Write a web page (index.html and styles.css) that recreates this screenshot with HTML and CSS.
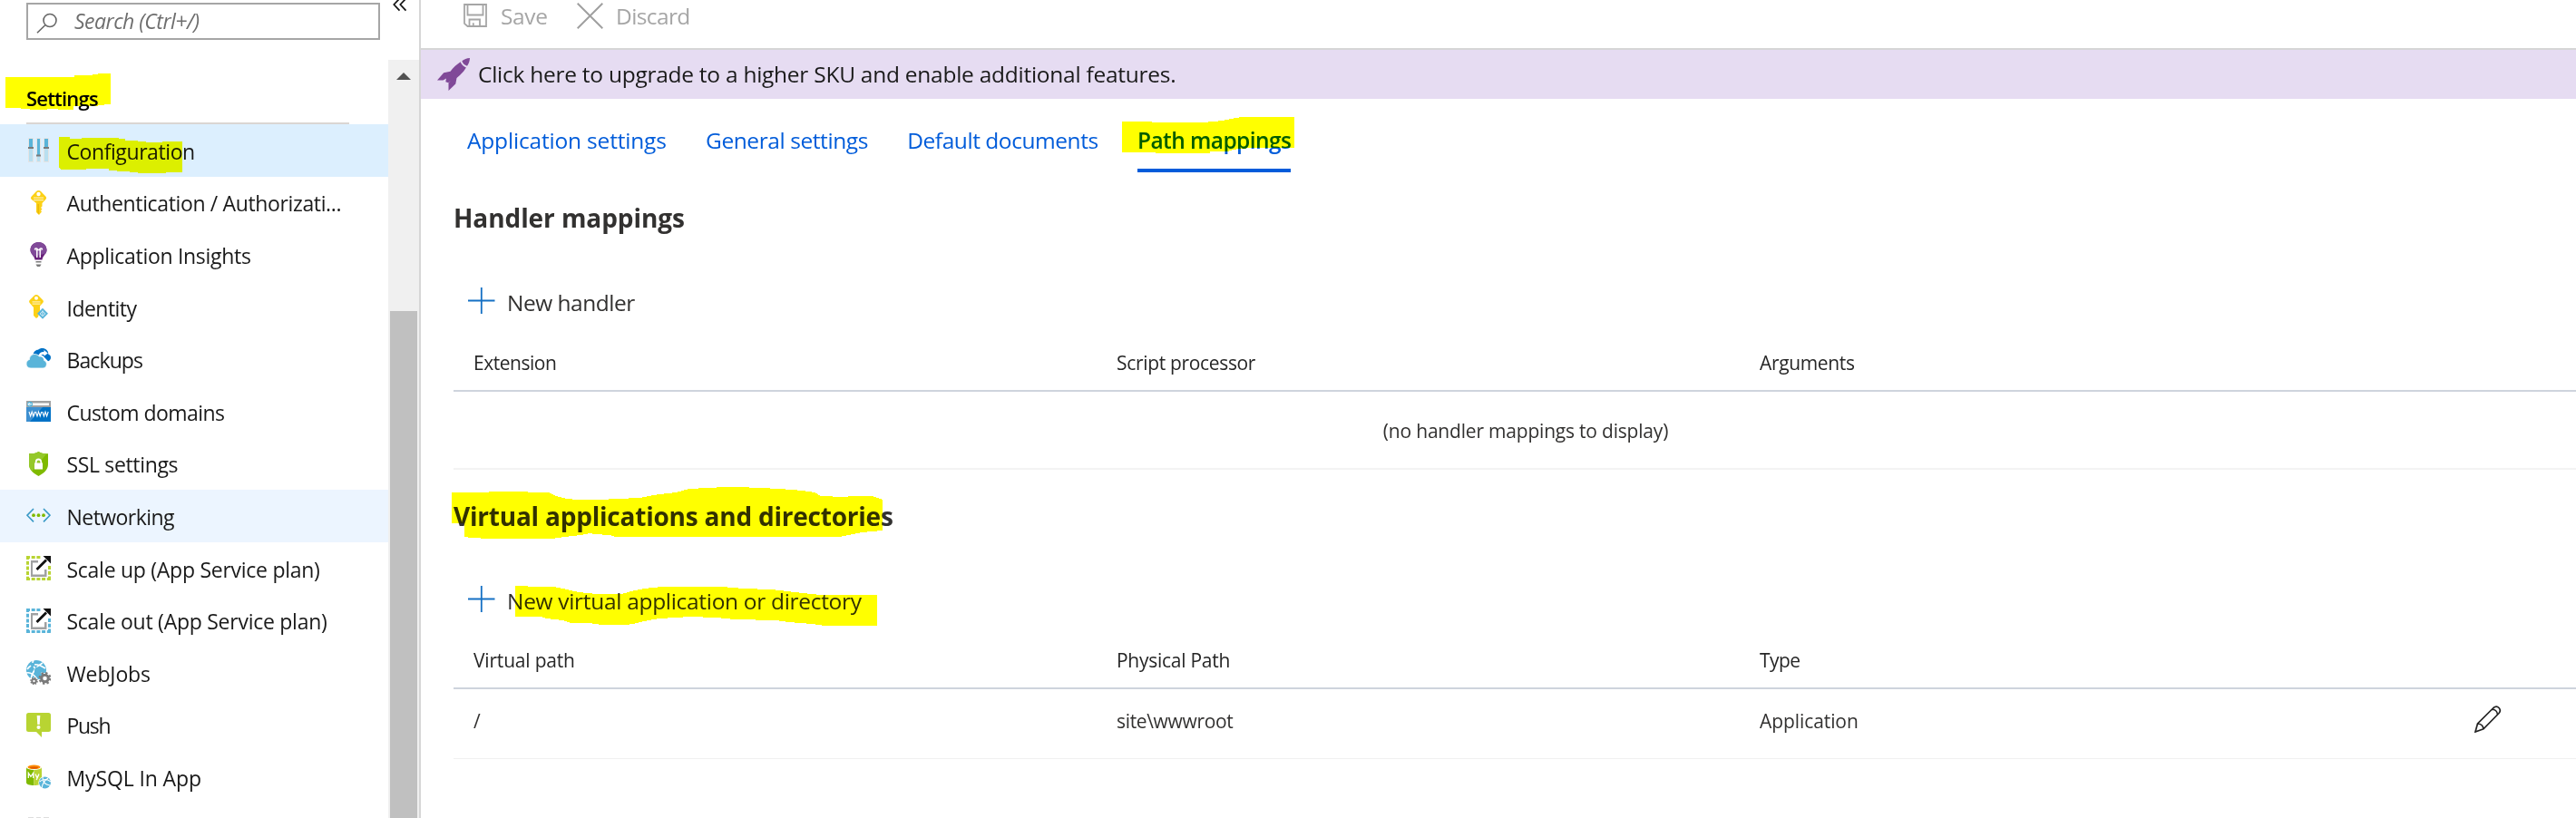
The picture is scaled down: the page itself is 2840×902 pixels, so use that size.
FILE: index.html
```html
<!DOCTYPE html>
<html lang="en">
<head>
<meta charset="utf-8">
<title>Configuration - Path mappings</title>
<link rel="stylesheet" href="styles.css">
</head>
<body>
<div class="page">
  <aside class="sidebar">
    <div class="search-row">
      <div class="search">
        <svg class="search-icon" width="24" height="24" viewBox="0 0 24 24" fill="none" stroke="#666" stroke-width="1.6"><circle cx="15" cy="8.5" r="7"/><path d="M10 13.5L1 22.3"/></svg>
        <span class="search-text">Search (Ctrl+/)</span>
      </div>
      <svg class="collapse" width="16" height="13" viewBox="0 0 16 13" fill="none" stroke="#111" stroke-width="1.7"><path d="M7.5 -1.5L1.3 5L7.5 11.6M14.5 -1.5L8.3 5L14.5 11.6"/></svg>
    </div>
    <div class="side-body">
      <nav class="nav">
        <h2 class="nav-title">Settings</h2>
        <a class="item selected">
          <svg width="27" height="27" viewBox="0 0 27 27"><g fill="#e4e4e4"><path d="M2 0h6v27H2zM11 0h5v27h-5zM19 0h6v27h-6z"/></g><g fill="#b8dff0"><path d="M3 10h4v16H3zM12 20h3v6h-3zM20 10h4v16h-4z"/></g><g fill="#59b4d9"><path d="M3 1h4v9H3zM12 1h3v18h-3zM20 1h4v9h-4z"/></g><path d="M2 10h6v2H2zM11 18.500h5v2h-5zM19 10h6v2h-6z" fill="#7a7a7a"/></svg>
          <span class="k42">Configuration</span></a>
        <a class="item">
          <svg width="27" height="27" viewBox="0 0 27 27"><path d="M13.500 0c1 0 1.800.4 2.500 1.100l5.500 5.600c.8.900.8 2.200 0 3L17.500 14v3.500l-1.500 1.500 1.500 1.500-1.500 1.700 1 1.300-3 3.500-3-3V14L5.600 9.700c-.8-.8-.8-2.100 0-3L11 1.100C11.700.4 12.500 0 13.500 0z" fill="#fcd116"/><circle cx="13.500" cy="4" r="2.200" fill="#fff"/><path d="M8 7.500h11v1.300H8zM8 10h11v1.300H8z" fill="#fff" opacity=".65"/><path d="M12.500 15h1.500v11l-1.500-1z" fill="#e0a800" opacity=".6"/></svg>
          <span class="k36">Authentication / Authorizati...</span></a>
        <a class="item">
          <svg width="27" height="27" viewBox="0 0 27 27"><path d="M13.500 0c5.100 0 9 3.900 9 8.800 0 4.200-4.200 5.700-5 10.700h-8C8.700 14.500 4.500 13 4.500 8.800 4.500 3.900 8.400 0 13.500 0z" fill="#68217a"/><path d="M13.500 0c5.100 0 9 3.900 9 8.800 0 1.500-.5 2.700-1.200 3.700L8 16C6.500 13.300 4.500 12 4.500 8.800 4.500 3.900 8.400 0 13.500 0z" fill="#804998"/><path d="M11.800 17V8.500M15.200 17V8.500M9.500 8.500q0-2 1.700-1.500t.6 1.500h3.400q-1-1 .6-1.500t1.700 1.500" fill="none" stroke="#fff" stroke-width="1.500"/><path d="M10.500 21h6v1.500h-6zM10.500 24.500h6L15 27h-3z" fill="#7a7a7a"/></svg>
          <span class="k30">Application Insights</span></a>
        <a class="item">
          <svg width="27" height="27" viewBox="0 0 27 27"><path d="M11 0c1 0 1.700.4 2.400 1l4.900 5c.8.800.8 2 0 2.800L15 12.500v5l-2 7L11 26l-3-3v-9L3.700 8.900c-.8-.8-.8-2 0-2.800L8.700 1C9.400.4 10.100 0 11 0z" fill="#fcd116"/><circle cx="11" cy="3.700" r="2" fill="#fff"/><path d="M6.500 7.200h9v1.200h-9zM6.500 9.500h9v1.200h-9z" fill="#fff" opacity=".65"/><path d="M18 14.800l6 6-6 6-6-6z" fill="#59b4d9"/><path d="M18 17.300v6.500M15 21l3-2.700 3 2.700-3 2.500z" fill="none" stroke="#e6f4fa" stroke-width=".8"/></svg>
          <span class="k53">Identity</span></a>
        <a class="item">
          <svg width="27" height="27" viewBox="0 0 27 27"><path d="M7.500 8c.5-3 3-5.500 5.500-5.300C15 .8 19.500 0 22.500 3c1.700 1.500 1.800 3 1.700 4.500 2 .7 2.800 2 2.800 3.700 0 2-1.200 3.500-3 4L18 9z" fill="#0072c6"/><path d="M13.500 9c1-3 3.500-4.300 6-3.800V3l4.300 3.600-4.300 3.200V8c-2-.3-3 .2-4 2z" fill="#fff"/><path d="M5 23c-3 0-5-2-5-4.800s1.600-4.200 3.500-4.700C3.300 10 6 7.500 9 7.500c2.500 0 4.200 1 5.200 2.500 3-.5 5.300 1.500 5.500 4.500 1.700.5 2.700 2 2.700 4 0 2.500-1.600 4.500-4.200 4.500z" fill="#59b4d9" stroke="#fff" stroke-width=".8"/></svg>
          <span class="k90">Backups</span></a>
        <a class="item">
          <svg width="27" height="27" viewBox="0 0 27 27"><path d="M0 2h27v23H0z" fill="#0072c6"/><path d="M0 9h18L4 25H0z" fill="#3d8fd0"/><path d="M0 2h27v7H0z" fill="#a0a1a2"/><path d="M6.500 4.500H25v2.500H6.500z" fill="#fff"/><circle cx="4" cy="5.700" r="3" fill="#59b4d9"/><path d="M2 5.700h4M3.700 4L2 5.700l1.700 1.700" stroke="#fff" fill="none"/><path d="M3 14l1.600 5 1.600-5 1.600 5 1.600-5M10.400 14l1.600 5 1.600-5 1.600 5 1.600-5M17.800 14l1.600 5 1.600-5 1.600 5 1.600-5" fill="none" stroke="#fff" stroke-width="1.100"/></svg>
          <span class="k56">Custom domains</span></a>
        <a class="item">
          <svg width="27" height="27" viewBox="0 0 27 27"><path d="M13.500 0c3 2 6.500 2.500 10.500 2.200V14c0 6-5 10-10.500 13C8 24 3 20 3 14V2.200C7 2.500 10.500 2 13.500 0z" fill="#7fba00"/><path d="M13.500 0c3 2 6 2.400 9 2.300L6.500 21.500C4.300 19.500 3 17 3 14V2.200C7 2.500 10.500 2 13.500 0z" fill="#94c82a"/><path d="M9 12.500h9v7H9z" fill="#fff"/><path d="M10.700 13v-1.500c0-4 5.600-4 5.600 0V13" fill="none" stroke="#fff" stroke-width="1.800"/></svg>
          <span class="k35">SSL settings</span></a>
        <a class="item hover">
          <svg width="27" height="27" viewBox="0 0 27 27"><path d="M8 6L1 13.200l7 7.200M19 6l7 7.200-7 7.200" fill="none" stroke="#3999c6" stroke-width="1.600"/><g fill="#7fba00"><circle cx="8" cy="13.200" r="1.900"/><circle cx="13.500" cy="13.200" r="1.900"/><circle cx="19" cy="13.200" r="1.900"/></g></svg>
          <span class="k55">Networking</span></a>
        <a class="item">
          <svg width="27" height="27" viewBox="0 0 27 27"><path d="M1.500 0v27M25.500 11v16M0 1.500h17M0 25.500h27" fill="none" stroke="#b8d432" stroke-width="3" stroke-dasharray="4 1.700"/><path d="M5 5h8v2.500H7v13h13V15h2.500v8H5z" fill="#a0a1a2"/><path d="M11.500 15L22 4.500" stroke="#111" stroke-width="2.800"/><path d="M18.500 0H27v8.500z" fill="#111"/></svg>
          <span class="k27">Scale up (App Service plan)</span></a>
        <a class="item">
          <svg width="27" height="27" viewBox="0 0 27 27"><path d="M1.500 0v27M25.500 11v16M0 1.500h17M0 25.500h27" fill="none" stroke="#59b4d9" stroke-width="3" stroke-dasharray="4 1.700"/><path d="M5 5h8v2.500H7v13h13V15h2.500v8H5z" fill="#a0a1a2"/><path d="M11.500 15L22 4.500" stroke="#111" stroke-width="2.800"/><path d="M18.500 0H27v8.500z" fill="#111"/></svg>
          <span class="k26">Scale out (App Service plan)</span></a>
        <a class="item">
          <svg width="27" height="27" viewBox="0 0 27 27"><circle cx="11" cy="11" r="11" fill="#59b4d9"/><path d="M1 10C6 3 12 3 21 9M8 0c-3 4 2 14 13 15M5 21C6 13 12 6 18 3M0 14c4-1 8 1 12 7" fill="none" stroke="#fff" stroke-width="1.700"/><circle cx="13" cy="11.500" r="4" fill="#59b4d9"/><circle cx="7" cy="5" r="2.200" fill="#59b4d9"/><path d="M13 21h14v6H3v-6l6-2z" fill="#fff"/><circle cx="20.500" cy="20" r="5.800" fill="none" stroke="#7a7a7a" stroke-width="2.400" stroke-dasharray="2.300 2.250"/><circle cx="20.500" cy="20" r="3.800" fill="#fff" stroke="#7a7a7a" stroke-width="3"/><circle cx="8.500" cy="23" r="3.500" fill="none" stroke="#7a7a7a" stroke-width="1.600" stroke-dasharray="1.400 1.350"/><circle cx="8.500" cy="23" r="2.200" fill="#fff" stroke="#7a7a7a" stroke-width="2"/></svg>
          <span class="k13">WebJobs</span></a>
        <a class="item">
          <svg width="27" height="27" viewBox="0 0 27 27"><path d="M2.500 0h22A2.500 2.500 0 0 1 27 2.500v16a2.500 2.500 0 0 1-2.500 2.500H17v6l-6-6H2.500A2.500 2.500 0 0 1 0 18.500v-16A2.500 2.500 0 0 1 2.500 0z" fill="#b8d432"/><path d="M11.700 3h3.600l-.6 10h-2.400z" fill="#fff"/><circle cx="13.500" cy="16" r="2" fill="#fff"/></svg>
          <span class="k130">Push</span></a>
        <a class="item">
          <svg width="27" height="27" viewBox="0 0 27 27"><path d="M0 3v17c0 1.700 3.500 3 8.500 3V3z" fill="#7fba00"/><path d="M8.500 3v20c5 0 8.500-1.300 8.500-3V3z" fill="#b8d432"/><ellipse cx="8.500" cy="3" rx="8.500" ry="3" fill="#fff"/><ellipse cx="8.500" cy="2.800" rx="7" ry="2.300" fill="#ff8c00"/><ellipse cx="8.500" cy="3.600" rx="4.500" ry="1.100" fill="#dd5900"/><path d="M2.300 15V9.300l2.700 4 2.700-4V15M10 10.500l2 4.300 2-4.300-2.800 6.500" fill="none" stroke="#fff" stroke-width="1.300"/><circle cx="20.500" cy="20" r="7.200" fill="#fff"/><circle cx="20.500" cy="20" r="6.500" fill="#59b4d9"/><path d="M14.500 19q6-5 12.500 0M18 14q0 8 8 9M17 26q1-7 7-11" fill="none" stroke="#fff" stroke-width="1.100"/></svg>
          <span class="k12">MySQL In App</span></a>
        <a class="item">
          <svg width="27" height="27" viewBox="0 0 27 27"><path d="M2 0h6v10H2zM11 0h5v10h-5zM19 0h6v10h-6z" fill="#ddd"/></svg></a>
      </nav>
      <div class="scrollbar">
        <svg class="arrow" width="16" height="8" viewBox="0 0 16 8"><path d="M0 8L8 0l8 8z" fill="#505050"/></svg>
        <div class="thumb"></div>
      </div>
    </div>
  </aside>

  <main class="main">
    <div class="toolbar">
      <svg class="save-icon" width="26" height="26" viewBox="0 0 26 26" fill="none" stroke="#a6a6a6" stroke-width="1.800"><path d="M1 1h24v24H4.500L1 21.800zM4.500 1v11.500h17V1M6.500 25v-7.500H18V25M10.800 25v-3.700"/></svg>
      <span class="save k35">Save</span>
      <svg class="discard-icon" width="29" height="29" viewBox="0 0 29 29" stroke="#a0a0a0" stroke-width="2"><path d="M.7.7l27.600 27.600M28.300.7L.7 28.300"/></svg>
      <span class="k62">Discard</span>
    </div>
    <div class="banner">
      <svg width="36" height="36" viewBox="0 0 36 36" fill="#804998"><path d="M36 0c-.2 3.500-1.200 6.300-3 8.700-3-1-4.800-2.800-5.700-5.500C29.800 1.300 32.500.3 36 0z"/><path d="M25.700 4.300c1 3 3.200 5.100 6.200 6.100-2.500 4.300-6 8-10.400 11.700L20.300 28.500 12.500 36v-8.500l2.300-2.500-2.500 2.200-3-1 .7-3.800-3.500 2H0l7.200-8.200 7.300-1.500C18 10.300 21.500 7 25.700 4.300z"/></svg>
      <span class="banner-text k26">Click here to upgrade to a higher SKU and enable additional features.</span>
    </div>
    <div class="tabs">
      <a class="tab k18">Application settings</a>
      <a class="tab k42">General settings</a>
      <a class="tab k45">Default documents</a>
      <a class="tab active k57">Path mappings</a>
    </div>

    <section class="section">
      <h3 class="heading k08">Handler mappings</h3>
      <div class="command">
        <svg width="30" height="30" viewBox="0 0 30 30" stroke="#1570c4" stroke-width="1.800"><path d="M0 14.500h29.500M14.800 0v29"/></svg>
        <span class="k50">New handler</span>
      </div>
      <div class="grid head">
        <span class="k48">Extension</span><span class="k33">Script processor</span><span class="k35">Arguments</span>
      </div>
      <div class="empty k20">(no handler mappings to display)</div>
    </section>

    <section class="section second">
      <h3 class="heading k22">Virtual applications and directories</h3>
      <div class="command">
        <svg width="30" height="30" viewBox="0 0 30 30" stroke="#1570c4" stroke-width="1.800"><path d="M0 14.500h29.500M14.800 0v29"/></svg>
        <span class="k31">New virtual application or directory</span>
      </div>
      <div class="grid head">
        <span class="k19">Virtual path</span><span class="k26">Physical Path</span><span class="k60">Type</span>
      </div>
      <div class="grid row">
        <span>/</span><span class="k34">site\wwwroot</span><span class="k08">Application</span>
        <svg class="edit" width="30" height="30" viewBox="0 0 30 30" fill="none" stroke="#222" stroke-width="1.700"><path d="M1 29L3.500 20 21 2.500c4.500-4 9.500 2 6 6L10 25.800zM3.500 20c3.500 0 6 2.500 6.500 5.800M19.300 4.200c3.500 0 6 2.500 6.200 5.800"/></svg>
      </div>
    </section>
  </main>
</div>

<!-- Highlighter marks lying over the page -->
<svg class="marks" width="2840" height="902" viewBox="0 0 2840 902" fill="#ff0" shape-rendering="crispEdges">
  <path d="M6 85H82V83H102V82H108V81H122V115L108 116V117H81V121H64V120H52V121H33V120H23V119H6z"/>
  <path d="M65 151H77V153H90V152H131V153H138V155H152V156H161V157H179V156H201V190H183V191H152V190H143V189H129V188H120V186H95V187H67L65 185z"/>
  <path d="M1237 134H1270V135H1332V134H1343V133H1350V132L1360 131V130H1366V129H1427V163H1382L1366 164L1355 166V167H1334V169H1274V168H1237z"/>
  <path d="M498 543H539V542H582V543H605L613 547L625 550L636 551H662L680 550L705 549L720 546L745 543L760 539L780 538L800 537H814L838 538L860 539L885 541L898 543L905 547L930 548L940 547H962L973 551V585L950 587L940 589L925 592H885L880 592H770L678 592L672 590L655 589L650 588L640 590L622 592L608 594H540L520 593L512 592V577H498z"/>
  <path d="M568 646H582V647H611L625 650L638 653L658 655H685L700 651L710 649L730 647H796L820 649L850 650L868 652L885 654L905 656H967V690H910L895 688L870 686L855 684L810 683L790 681L760 680L745 681L727 682L710 685L698 688L690 689H663L650 687H630L620 684L602 682L597 680H568z"/>
</svg>
</body>
</html>
```
FILE: styles.css
```css
* { box-sizing: border-box; }
body {
  margin: 0;
  background: #fff;
  font-family: "Open Sans", "Noto Sans", sans-serif;
  color: #1a1a1a;
}
h2, h3 { margin: 0; }
svg { display: block; flex: none; }

.page { display: flex; width: 2840px; height: 902px; overflow: hidden; white-space: nowrap; }

/* Sidebar */
.sidebar { flex: none; width: 464px; border-right: 2px solid #d6d6d6; display: flex; flex-direction: column; }
.search-row { display: flex; height: 66px; flex: none; padding-left: 29px; }
.search {
  display: flex;
  width: 390px;
  height: 41px;
  margin-top: 3px;
  border: 2px solid #a6a6a6;
  padding-left: 9px;
}
.search-icon { margin-top: 9px; }
.search-text { margin-left: 18px; font-size: 23px; line-height: 37px; font-style: italic; color: #6e6e6e; letter-spacing: -.5px; }
.collapse { margin-left: 14px; }

.side-body { display: flex; flex: 1; min-height: 0; }
.nav { width: 428px; overflow: hidden; }
.nav-title {
  width: 356px;
  height: 71px;
  margin-left: 29px;
  padding-top: 27px;
  border-bottom: 2px solid #dad6d3;
  font-size: 22px;
  line-height: 30px;
  font-weight: 600;
  letter-spacing: -.8px;
  color: #000;
}
.item { display: flex; align-items: center; height: 57.6px; padding-left: 29px; gap: 17.5px; font-size: 23px; line-height: 30px; }
.item span { padding-top: 2px; }
.selected { background: #dceffe; }
.hover { background: #ecf5ff; }

.scrollbar { width: 34px; background: #f0f0f0; padding: 14px 2px 0; display: flex; flex-direction: column; }
.arrow { margin-left: 7px; }
.thumb { flex: 1; margin-top: 255px; background: #c0c0c0; }

/* Main area */
.main { flex: 1; min-width: 0; overflow: hidden; }
.toolbar {
  display: flex;
  align-items: center;
  height: 55px;
  padding: 0 0 19px 47px;
  border-bottom: 2px solid #d6d6d6;
  font-size: 24.5px;
  line-height: 34px;
  color: #a6a6a6;
}
.save { margin-left: 15px; width: 84px; }
.toolbar span { padding-top: 2px; }
.discard-icon { margin-right: 14px; }
.banner {
  display: flex;
  align-items: center;
  gap: 9px;
  height: 54px;
  padding-left: 18px;
  background: #e6dcf2;
  font-size: 24.5px;
}
.banner-text { padding-bottom: 2px; }
.tabs { display: flex; gap: 43.3px; margin-top: 14px; padding-left: 51px; }
.tab { height: 67px; font-size: 24.5px; line-height: 63px; color: #015cda; }
.active { font-weight: 600; border-bottom: 4px solid #015cda; }

.section { width: 2364px; margin-left: 36px; padding-top: 30px; }
.second { padding-top: 31px; }
.heading { font-size: 28px; line-height: 40px; font-weight: 700; color: #323130; }
.command { display: flex; align-items: center; gap: 13px; height: 41px; margin-top: 53px; padding-left: 16px; font-size: 24.5px; line-height: 41px; color: #323130; }
.command svg { margin-top: -4px; }
.grid { display: grid; grid-template-columns: 709px 709px 709px 1fr; align-items: center; padding-left: 22px; font-size: 21px; line-height: 30px; }
.head { height: 62px; margin-top: 16px; border-bottom: 2px solid #ced4dd; color: #262626; }
.second .head { margin-top: 15px; }
.empty { height: 86px; border-bottom: 2px solid #f3f3f3; text-align: center; font-size: 21px; line-height: 86px; color: #323130; }
.row { height: 77px; padding-bottom: 6px; border-bottom: 1px solid #f0f0f0; color: #323130; }
.edit { margin: -5px 0 0 79px; }

.marks { position: absolute; left: 0; top: 0; mix-blend-mode: multiply; pointer-events: none; }

/* Tracking steps */
.k08 { letter-spacing: -.08px; }
.k12 { letter-spacing: -.12px; }
.k13 { letter-spacing: -.13px; }
.k18 { letter-spacing: -.18px; }
.k19 { letter-spacing: -.19px; }
.k20 { letter-spacing: -.2px; }
.k22 { letter-spacing: -.22px; }
.k26 { letter-spacing: -.26px; }
.k27 { letter-spacing: -.27px; }
.k30 { letter-spacing: -.3px; }
.k31 { letter-spacing: -.31px; }
.k33 { letter-spacing: -.33px; }
.k34 { letter-spacing: -.34px; }
.k35 { letter-spacing: -.35px; }
.k36 { letter-spacing: -.36px; }
.k42 { letter-spacing: -.42px; }
.k45 { letter-spacing: -.45px; }
.k48 { letter-spacing: -.48px; }
.k50 { letter-spacing: -.5px; }
.k53 { letter-spacing: -.53px; }
.k55 { letter-spacing: -.55px; }
.k56 { letter-spacing: -.56px; }
.k57 { letter-spacing: -.57px; }
.k60 { letter-spacing: -.6px; }
.k62 { letter-spacing: -.62px; }
.k90 { letter-spacing: -.9px; }
.k130 { letter-spacing: -1.3px; }
```
